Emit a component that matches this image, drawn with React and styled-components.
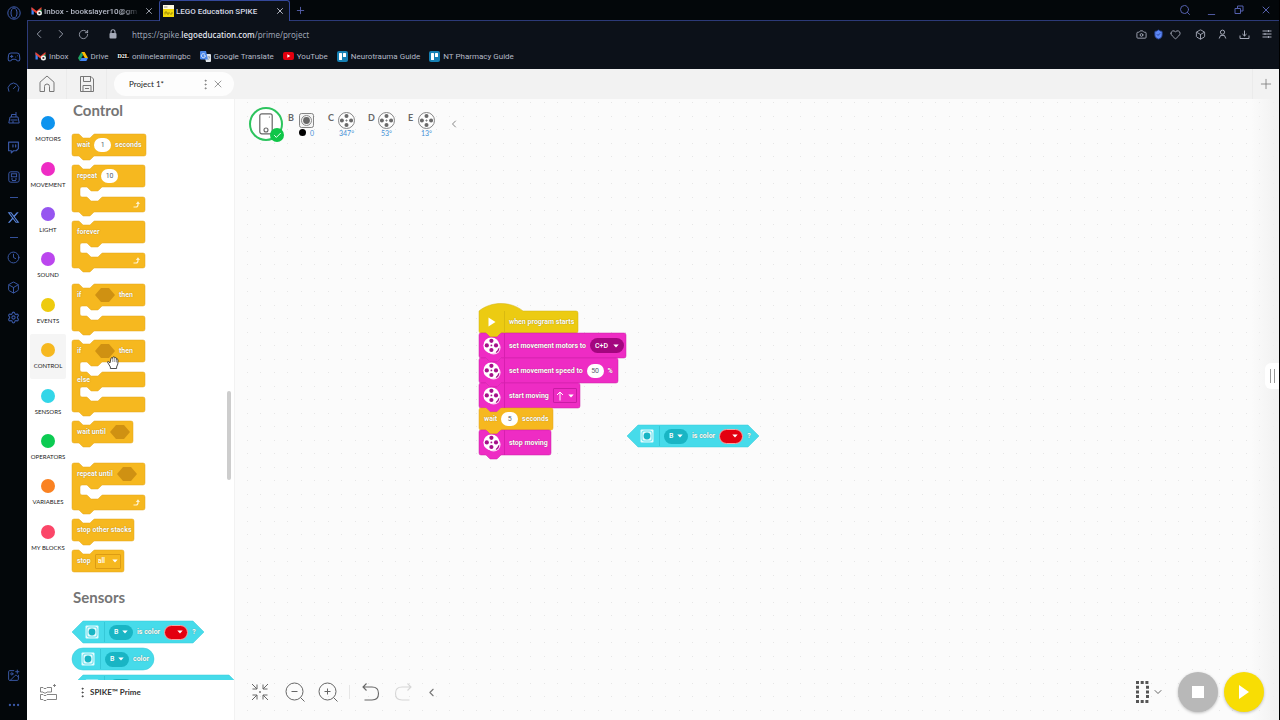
import React from 'react';
import styled, { createGlobalStyle } from 'styled-components';
import {
    Gamepad2, Gauge, Twitch, Clock, Box, Settings, ImagePlus, Ellipsis,
    X, Plus, Search, Minus, ChevronLeft, ChevronRight, ChevronDown, RotateCw,
    Camera, ShieldCheck, Heart, EllipsisVertical, Check,
} from 'lucide-react';
import { FaXTwitter } from 'react-icons/fa6';

const ORANGE = '#f6b81f';
const ORANGE_DARK = '#cf9112';
const PINK = '#ee2cc4';
const YELLOW = '#eccb12';
const CYAN = '#46dbea';
const CYAN_DARK = '#19b5c4';

const categories = [
    { name: 'MOTORS', color: '#0d93ee' },
    { name: 'MOVEMENT', color: '#ee2cc4' },
    { name: 'LIGHT', color: '#9655f0' },
    { name: 'SOUND', color: '#bb46ee' },
    { name: 'EVENTS', color: '#eecb0e' },
    { name: 'CONTROL', color: '#f6b81f', active: true },
    { name: 'SENSORS', color: '#33d6e8' },
    { name: 'OPERATORS', color: '#0ccb52' },
    { name: 'VARIABLES', color: '#fa8222' },
    { name: 'MY BLOCKS', color: '#fb4668' },
];

/* block outlines: the notch is 17 wide and 4 deep */
const NOTCH_R = 'c1 0 1 0 2 1 l2 2 c1 1 1 1 2 1 h5 c1 0 1 0 2 -1 l2 -2 c1 -1 1 -1 2 -1';
const NOTCH_L = 'c-1 0 -1 0 -2 1 l-2 2 c-1 1 -1 1 -2 1 h-5 c-1 0 -1 0 -2 -1 l-2 -2 c-1 -1 -1 -1 -2 -1';

function stackPath(w, rows, { hat, cap }) {
    let d = hat
        ? `M0 0 C12 -10 32 -10 44 0 H${w - 2} a2 2 0 0 1 2 2`
        : `M0 2 a2 2 0 0 1 2 -2 h4 ${NOTCH_R} H${w - 2} a2 2 0 0 1 2 2`;
    let y = 0;
    rows.forEach((h, i) => {
        y += h;
        if (i % 2 === 1) {
            d += ` v${h - 4} a2 2 0 0 0 2 2 H14 ${NOTCH_R} H${w - 2} a2 2 0 0 1 2 2`;
            return;
        }
        d += ` V${y - 2} a2 2 0 0 1 -2 2`;
        if (i < rows.length - 1) {
            d += ` H31 ${NOTCH_L} H10 a2 2 0 0 0 -2 2`;
        } else {
            d += `${cap ? '' : ` H23 ${NOTCH_L}`} H2 a2 2 0 0 1 -2 -2 Z`;
        }
    });
    return d;
}

function Stack({ w, rows, fill, line, hat, cap, children }) {
    const h = rows.reduce((a, b) => a + b, 0);
    return (
        <Block $w={w}>
            <Shape width={w} height={h}>
                <path d={stackPath(w, rows, { hat, cap })} fill={fill} stroke={line || '#e2a51c'} strokeWidth="0.5" />
            </Shape>
            <Body>{children}</Body>
        </Block>
    );
}

function Reporter({ w, round, children }) {
    const d = round
        ? `M11 0 H${w - 11} a11 11 0 0 1 0 22 H11 a11 11 0 0 1 0 -22 Z`
        : `M11 0 H${w - 11} L${w} 11 L${w - 11} 22 H11 L0 11 Z`;
    return (
        <Block $w={w}>
            <Shape width={w} height={22}>
                <path d={d} fill={CYAN} stroke="#35c8d8" strokeWidth="0.5" />
            </Shape>
            <Body>
                <Row $h={22} $pad={round ? 9 : 13}>{children}</Row>
            </Body>
        </Block>
    );
}

const Caret = () => (
    <svg width="6" height="4" viewBox="0 0 6 4"><path d="M0.3 0.5 H5.7 L3 3.6 Z" fill="#fff" /></svg>
);

const Dropdown = ({ label, value, icon, ...style }) => (
    <Picker {...style}>
        {icon}
        <select aria-label={label} defaultValue={value}><option>{value}</option></select>
        <Caret />
    </Picker>
);

const UpArrow = () => (
    <svg width="8" height="10" viewBox="0 0 8 10" fill="none" stroke="#fff" strokeWidth="1">
        <path d="M4 9.5 V1 M1 4 L4 1 L7 4" />
    </svg>
);

const Hexagon = () => (
    <svg width="20" height="14" viewBox="0 0 20 14"><path d="M6 0 H14 L20 7 L14 14 H6 L0 7 Z" fill={ORANGE_DARK} /></svg>
);

const LoopArrow = () => (
    <svg width="7" height="7" viewBox="0 0 7 7">
        <path d="M0.5 6 H3 Q5 6 5 3.5 V2" fill="none" stroke="#fff3cf" strokeWidth="1.2" />
        <path d="M2.8 3 L5 0.2 L7 3 Z" fill="#fff3cf" />
    </svg>
);

const SensorIcon = () => (
    <svg width="14" height="14" viewBox="0 0 14 14">
        <rect x="0.5" y="0.5" width="13" height="13" rx="1" fill="#e6fbfd" />
        <rect x="2" y="2" width="10" height="10" rx="2" fill="none" stroke={CYAN} strokeWidth="0.8" />
        <circle cx="7" cy="7" r="3.4" fill={CYAN_DARK} />
    </svg>
);

const WheelIcon = () => (
    <svg width="18" height="18" viewBox="0 0 18 18">
        <circle cx="10.6" cy="10.6" r="7" fill="#fbd5f2" />
        <circle cx="8.4" cy="8.4" r="8" fill="#fff" />
        <g fill="#a5108a">
            <circle cx="8.4" cy="3.8" r="2.1" /><circle cx="8.4" cy="13" r="2.1" />
            <circle cx="3.8" cy="8.4" r="2.1" /><circle cx="13" cy="8.4" r="2.1" />
            <circle cx="8.4" cy="8.4" r="0.9" />
        </g>
        <path d="M13.2 15.4 Q15.6 14 15.8 11.4" fill="none" stroke="#a5108a" strokeWidth="1.2" />
    </svg>
);

const MotorIcon = () => (
    <svg width="17" height="17" viewBox="0.5 0.5 17 17">
        <circle cx="9" cy="9" r="8" fill="#fdfdfd" stroke="#777" strokeWidth="0.9" />
        <g fill="#6a6a6a">
            <circle cx="9" cy="4.4" r="2" /><circle cx="9" cy="13.6" r="2" />
            <circle cx="4.4" cy="9" r="2" /><circle cx="13.6" cy="9" r="2" />
        </g>
        <path d="M9 7.8 V10.2 M7.8 9 H10.2" stroke="#777" strokeWidth="0.7" />
    </svg>
);

const ColorSensorIcon = () => (
    <svg width="17" height="17" viewBox="0.5 0.5 17 17">
        <rect x="2" y="2" width="14" height="14" rx="2" fill="#f4f4f4" stroke="#777" strokeWidth="0.9" />
        <circle cx="9" cy="9" r="5" fill="none" stroke="#8b8b8b" strokeWidth="1" />
        <circle cx="9" cy="9" r="3.4" fill="#686868" />
    </svg>
);

const GmailIcon = () => (
    <svg width="11" height="10" viewBox="0 0 11 10">
        <path d="M0.5 1.5 V8.5 H2.8 V4.4" fill="#4285f4" />
        <path d="M0.5 1 L5.5 5 L10.5 1 V3.6 L5.5 7.4 L0.5 3.6 Z" fill="#ea4335" />
        <path d="M8.2 4.8 L10.5 3 V8.5 H8.2 Z" fill="#34a853" />
        <circle cx="8.4" cy="7" r="2.5" fill="#f3f3f3" />
        <circle cx="8.4" cy="7" r="1.1" fill="#333" />
    </svg>
);

const DriveIcon = () => (
    <svg width="10" height="9" viewBox="0 0 10 9">
        <path d="M3.4 0 H6.6 L10 6 H6.8 Z" fill="#fbbc04" />
        <path d="M3.4 0 L5 2.9 L1.7 9 L0 6 Z" fill="#1fa463" />
        <path d="M3.4 6 H10 L8.3 9 H1.7 Z" fill="#4285f4" />
    </svg>
);

const TranslateIcon = () => (
    <svg width="11" height="11" viewBox="0 0 11 11">
        <path d="M4 3 H10 Q11 3 11 4 V10 Q11 11 10 11 H6 Z" fill="#dfe4ea" />
        <path d="M1 0 H6 L8 8.5 H1 Q0 8.5 0 7.5 V1 Q0 0 1 0 Z" fill="#4a86e8" />
        <path d="M5 3.5 A2 2 0 1 0 5.4 4.8 H3.8" fill="none" stroke="#fff" strokeWidth="0.8" />
        <path d="M7.6 6 H10 M8.8 5.2 V6 M9.8 6 Q9.4 8 7.9 8.8" fill="none" stroke="#7a8796" strokeWidth="0.6" />
    </svg>
);

const YoutubeIcon = () => (
    <svg width="11" height="8" viewBox="0 0 11 8">
        <rect width="11" height="8" rx="2" fill="#e3000f" />
        <path d="M4.3 2.2 L7.3 4 L4.3 5.8 Z" fill="#fff" />
    </svg>
);

const TrelloIcon = () => (
    <svg width="11" height="11" viewBox="0 0 11 11">
        <rect width="11" height="11" rx="2" fill="#1680b4" />
        <rect x="2" y="2" width="3" height="7" rx="0.5" fill="#fff" />
        <rect x="6" y="2" width="3" height="4" rx="0.5" fill="#fff" />
    </svg>
);

const SpikeIcon = () => (
    <svg width="11" height="12" viewBox="0 0 11 12">
        <rect width="11" height="12" fill="#f3d90c" />
        <rect width="11" height="4" fill="#fffbe0" />
        <path d="M1 2 H4.5" stroke="#777" strokeWidth="0.8" />
        <path d="M2 9.5 V7 H4 V9 H6 V7 M7 9 H9 V7" fill="none" stroke="#8b7c05" strokeWidth="0.8" />
    </svg>
);

const OperaIcon = () => (
    <svg width="14" height="14" viewBox="0 0 14 14" fill="none" stroke="#3f5cae" strokeWidth="1">
        <circle cx="7" cy="7" r="6.2" />
        <ellipse cx="7" cy="7" rx="3" ry="5" />
    </svg>
);

const CleanerIcon = () => (
    <svg width="12" height="13" viewBox="0 0 12 13" fill="none" stroke="currentColor" strokeWidth="1">
        <path d="M2 6 H10 L11.2 12 H0.8 Z M3.5 6 V3.5 H8 M8 6 V1 M2.5 9 H9.5 M5 12 V10" />
    </svg>
);

const ModsIcon = () => (
    <svg width="12" height="12" viewBox="0 0 12 12" fill="none" stroke="currentColor" strokeWidth="1">
        <rect x="0.8" y="0.8" width="10.4" height="10.4" rx="2" />
        <rect x="3.4" y="2.8" width="5.2" height="3" />
        <path d="M3 8 H5 M7 8 H9 M4 9.5 H8" />
    </svg>
);

const RestoreIcon = () => (
    <svg width="10" height="10" viewBox="0 0 10 10" fill="none" stroke="currentColor" strokeWidth="1">
        <path d="M1 3.5 H6.5 V8.5 H1 Z M3.5 3.5 V1 H9 V6 H6.5" />
    </svg>
);

const LockIcon = () => (
    <svg width="8" height="10" viewBox="0 0 8 10">
        <rect x="0.5" y="4" width="7" height="5.5" rx="1" fill="#a6abb9" />
        <path d="M2 4 V2.8 A2 2 0 0 1 6 2.8 V4" fill="none" stroke="#a6abb9" strokeWidth="1.1" />
    </svg>
);

const PersonIcon = () => (
    <svg width="9" height="11" viewBox="0 0 9 11" fill="none" stroke="currentColor" strokeWidth="1">
        <circle cx="4.5" cy="3.2" r="2.1" />
        <path d="M1.2 9.5 L2.6 6.4 H6.4 L7.8 9.5" />
    </svg>
);

const DownloadIcon = () => (
    <svg width="11" height="11" viewBox="0 0 11 11" fill="none" stroke="currentColor" strokeWidth="1">
        <path d="M5.5 1.5 V7 M3.4 5 L5.5 7 L7.6 5 M1 6.5 V9.5 H10 V6.5" />
    </svg>
);

const SlidersIcon = () => (
    <svg width="10" height="10" viewBox="0 0 10 10" fill="none" stroke="currentColor" strokeWidth="1">
        <path d="M0.5 2 H9.5 M0.5 5 H9.5 M0.5 8 H9.5 M6.5 1 V3 M3 4 V6 M6.5 7 V9" />
    </svg>
);

const HomeIcon = () => (
    <svg width="16" height="18" viewBox="0 0 16 18" fill="none" stroke="#777" strokeWidth="1">
        <path d="M1 7.2 L8 1 L15 7.2 V16.5 H10.5 V11.5 Q10.5 9 8 9 Q5.5 9 5.5 11.5 V16.5 H1 Z" />
    </svg>
);

const SaveIcon = () => (
    <svg width="14" height="16" viewBox="0 0 14 16" fill="none" stroke="#777" strokeWidth="1">
        <path d="M0.5 0.5 H11 L13.5 3 V15.5 H0.5 Z M3.5 0.5 V5.5 H10.5 V0.5 M3 15.5 V9.5 H11 V15.5 M5 12.5 H9" />
    </svg>
);

const HubIcon = () => (
    <svg width="14" height="22" viewBox="0 0 14 22" fill="none" stroke="#666">
        <rect x="0.8" y="0.8" width="12.4" height="20" rx="2" strokeWidth="1.2" />
        <circle cx="7" cy="17" r="2" strokeWidth="1.1" />
        <circle cx="10.4" cy="4" r="0.6" fill="#666" stroke="none" />
    </svg>
);

const ExtensionIcon = () => (
    <svg width="17" height="17" viewBox="0 0 17 17" fill="none" stroke="#777" strokeWidth="0.9">
        <path d="M0.5 3.5 H3 L4 4.5 H6 L7 3.5 H11.5 V8 H7 L6 9 H4 L3 8 H0.5 Z" />
        <path d="M0.5 10.5 H3 L4 11.5 H6 L7 10.5 H16.5 V15.5 H7 L6 16.5 H4 L3 15.5 H0.5 Z" />
        <path d="M14.5 0 V3 M13 1.5 H16" />
    </svg>
);

const FitIcon = () => (
    <svg width="18" height="18" viewBox="0 0 18 18" fill="none" stroke="#666" strokeWidth="1">
        <path d="M1 1 L6 6 M1.5 6 H6 V1.5 M17 1 L12 6 M16.5 6 H12 V1.5 M1 17 L6 12 M1.5 12 H6 V16.5 M17 17 L12 12 M16.5 12 H12 V16.5" />
        <rect x="8.2" y="8.2" width="1.6" height="1.6" fill="#666" stroke="none" />
    </svg>
);

const ZoomIcon = ({ plus }) => (
    <svg width="20" height="20" viewBox="0 0 20 20" fill="none" stroke="#666" strokeWidth="1">
        <circle cx="9.5" cy="9.5" r="8.5" />
        <path d={`M15.5 15.5 L19.5 19.5 M6.5 9.5 H12.5 ${plus ? 'M9.5 6.5 V12.5' : ''}`} />
    </svg>
);

const UndoIcon = ({ flip }) => (
    <svg width="18" height="18" viewBox="0 0 18 18" fill="none" stroke={flip ? '#d6d6d6' : '#666'} strokeWidth="1.1">
        <g transform={flip ? 'translate(18 0) scale(-1 1)' : undefined}>
            <path d="M4.5 0.5 L1 4 L4.5 7.5 M1 4 H10 Q16.5 4 16.5 10.5 Q16.5 17 10 17 H2.5" />
        </g>
    </svg>
);

const MatrixIcon = () => (
    <svg width="13" height="22" viewBox="0 0 13 22" fill="none" stroke="#555" strokeWidth="3" strokeDasharray="3 1.7">
        <path d="M0 1.5 H13 M0 20.5 H13" />
        <path d="M1.5 4.7 V18 M11.5 4.7 V18" />
    </svg>
);

const HandCursor = () => (
    <svg width="12" height="13" viewBox="0 0 12 13">
        <path
            d="M3 7 L1.4 5.6 Q0.4 5.4 0.6 6.4 L3.4 11 V12.5 H9.6 V11 Q11.4 8.5 11 3.6 Q10.2 2.6 9.6 3.4 V2.2 Q8.6 1 7.8 2 V1.4 Q6.8 0 5.8 1.4 V2.2 Q4.6 1.2 4 2.2 Z"
            fill="#fff" stroke="#222" strokeWidth="0.8"
        />
        <path d="M5.8 2.2 V6 M7.8 2 V6 M9.6 3.4 V6.4" stroke="#222" strokeWidth="0.5" />
    </svg>
);

const Bookmark = ({ icon, children }) => (
    <BookmarkLink href="#">{icon}{children}</BookmarkLink>
);

function ColorQuestion() {
    return (
        <>
            <SensorIcon />
            <Divider $color="#35c8d8" />
            <Dropdown label="Port" value="B" $w={24} $bg={CYAN_DARK} />
            <Text>is color</Text>
            <Dropdown label="Color" value="" $w={24} $bg="#e3000f" $line="#f7a3a3" />
            <Text>?</Text>
        </>
    );
}

function Rail() {
    return (
        <RailBox>
            <RailButton aria-label="Opera menu" $first><OperaIcon /></RailButton>
            <RailButton aria-label="GX Corner"><Gamepad2 size={14} strokeWidth={1.8} /></RailButton>
            <RailButton aria-label="GX Control"><Gauge size={13} strokeWidth={1.8} /></RailButton>
            <RailButton aria-label="GX Cleaner"><CleanerIcon /></RailButton>
            <RailButton aria-label="Twitch"><Twitch size={13} strokeWidth={2.2} /></RailButton>
            <RailButton aria-label="Mods"><ModsIcon /></RailButton>
            <RailDash />
            <RailButton aria-label="X" $bright><FaXTwitter size={13} /></RailButton>
            <RailDash />
            <RailButton aria-label="History"><Clock size={13} strokeWidth={1.8} /></RailButton>
            <RailButton aria-label="Extensions"><Box size={13} strokeWidth={1.8} /></RailButton>
            <RailButton aria-label="Settings"><Settings size={13} strokeWidth={2} /></RailButton>
            <Spacer />
            <RailButton aria-label="Easy files"><ImagePlus size={13} strokeWidth={1.8} /></RailButton>
            <RailButton aria-label="More"><Ellipsis size={14} strokeWidth={2} /></RailButton>
        </RailBox>
    );
}

function BrowserBars() {
    return (
        <>
            <TabStrip>
                <Tab><GmailIcon /><TabTitle $fade>Inbox - bookslayer10@gm</TabTitle><X size={10} /></Tab>
                <Tab $active><SpikeIcon /><TabTitle>LEGO Education SPIKE</TabTitle><X size={10} /></Tab>
                <WindowButton aria-label="New tab"><Plus size={11} /></WindowButton>
                <Spacer />
                <WindowButton aria-label="Search tabs"><Search size={12} /></WindowButton>
                <WindowButton aria-label="Minimize" $low><Minus size={11} /></WindowButton>
                <WindowButton aria-label="Restore"><RestoreIcon /></WindowButton>
                <WindowButton aria-label="Close"><X size={12} /></WindowButton>
            </TabStrip>
            <AddressBar>
                <BarButton aria-label="Back"><ChevronLeft size={14} strokeWidth={1.5} /></BarButton>
                <BarButton aria-label="Forward"><ChevronRight size={14} strokeWidth={1.5} /></BarButton>
                <BarButton aria-label="Reload"><RotateCw size={11} strokeWidth={1.8} /></BarButton>
                <BarButton aria-label="Site information" $wide><LockIcon /></BarButton>
                <Url>https://spike.<b>legoeducation.com</b>/prime/project</Url>
                <Spacer />
                <ToolButton aria-label="Snapshot"><Camera size={11} /></ToolButton>
                <ToolButton aria-label="Ad blocker"><ShieldCheck size={11} color="#24408f" fill="#5c86f5" /></ToolButton>
                <ToolButton aria-label="Add to favorites"><Heart size={11} /></ToolButton>
                <ToolButton aria-label="Extensions" $gap={14}><Box size={11} /></ToolButton>
                <ToolButton aria-label="Profile" $gap={12}><PersonIcon /></ToolButton>
                <ToolButton aria-label="Downloads" $gap={12}><DownloadIcon /></ToolButton>
                <ToolButton aria-label="Easy setup" $gap={12}><SlidersIcon /></ToolButton>
            </AddressBar>
            <Bookmarks>
                <Bookmark icon={<GmailIcon />}>Inbox</Bookmark>
                <Bookmark icon={<DriveIcon />}>Drive</Bookmark>
                <Bookmark icon={<D2L>D2L</D2L>}>onlinelearningbc</Bookmark>
                <Bookmark icon={<TranslateIcon />}>Google Translate</Bookmark>
                <Bookmark icon={<YoutubeIcon />}>YouTube</Bookmark>
                <Bookmark icon={<TrelloIcon />}>Neurotrauma Guide</Bookmark>
                <Bookmark icon={<TrelloIcon />}>NT Pharmacy Guide</Bookmark>
            </Bookmarks>
        </>
    );
}

function Palette() {
    return (
        <PaletteBox>
            <Heading>Control</Heading>
            <Slot>
                <Stack w={74} rows={[22]} fill={ORANGE}>
                    <Row $h={22}><Text>wait</Text><Value aria-label="Seconds" defaultValue="1" /><Text>seconds</Text></Row>
                </Stack>
            </Slot>
            <Slot $gap={9}>
                <Stack w={73} rows={[22, 10, 15]} fill={ORANGE}>
                    <Row $h={22}><Text>repeat</Text><Value aria-label="Times" defaultValue="10" /></Row>
                    <Row $h={10} />
                    <Row $h={15} $end><LoopArrow /></Row>
                </Stack>
            </Slot>
            <Slot $gap={9}>
                <Stack w={73} rows={[22, 10, 15]} fill={ORANGE}>
                    <Row $h={22}><Text>forever</Text></Row>
                    <Row $h={10} />
                    <Row $h={15} $end><LoopArrow /></Row>
                </Stack>
            </Slot>
            <Slot $gap={16}>
                <Stack w={73} rows={[22, 10, 15]} fill={ORANGE}>
                    <Row $h={22}><Text $w={14}>if</Text><Hexagon /><Text>then</Text></Row>
                </Stack>
            </Slot>
            <Slot $gap={9}>
                <Stack w={73} rows={[22, 10, 15, 10, 15]} fill={ORANGE}>
                    <Row $h={22}><Text $w={14}>if</Text><Hexagon /><Text>then</Text></Row>
                    <Row $h={10} />
                    <Row $h={15}><Text>else</Text></Row>
                </Stack>
                <Pointer><HandCursor /></Pointer>
            </Slot>
            <Slot $gap={9}>
                <Stack w={61} rows={[22]} fill={ORANGE}>
                    <Row $h={22}><Text>wait until</Text><Hexagon /></Row>
                </Stack>
            </Slot>
            <Slot $gap={20}>
                <Stack w={73} rows={[22, 10, 15]} fill={ORANGE}>
                    <Row $h={22}><Text>repeat until</Text><Hexagon /></Row>
                    <Row $h={10} />
                    <Row $h={15} $end><LoopArrow /></Row>
                </Stack>
            </Slot>
            <Slot $gap={9}>
                <Stack w={62} rows={[22]} fill={ORANGE}>
                    <Row $h={22}><Text>stop other stacks</Text></Row>
                </Stack>
            </Slot>
            <Slot $gap={9}>
                <Stack w={52} rows={[22]} fill={ORANGE} cap>
                    <Row $h={22}>
                        <Text>stop</Text>
                        <Dropdown label="Stop" value="all" $w={26} $bg="transparent" $line="#dc9c14" $square />
                    </Row>
                </Stack>
            </Slot>
            <Heading $later>Sensors</Heading>
            <Slot><Reporter w={132}><ColorQuestion /></Reporter></Slot>
            <Slot $gap={5}>
                <Reporter w={82} round>
                    <SensorIcon />
                    <Divider $color="#35c8d8" />
                    <Dropdown label="Port" value="B" $w={24} $bg={CYAN_DARK} />
                    <Text>color</Text>
                </Reporter>
            </Slot>
            <Slot $gap={5}>
                <Reporter w={168}>
                    <SensorIcon />
                    <Divider $color="#35c8d8" />
                    <Dropdown label="Port" value="" $w={24} $bg={CYAN_DARK} />
                </Reporter>
            </Slot>
            <Thumb />
        </PaletteBox>
    );
}

function Program() {
    return (
        <>
            <Placed $x={244} $y={212}>
                <Stack w={99} rows={[22]} fill={YELLOW} line="#d0b010" hat>
                    <Row $h={22} $pad={0}>
                        <IconCell $line="#d9ba10"><svg width="8" height="10"><path d="M0.5 0.5 L7.5 5 L0.5 9.5 Z" fill="#fff" /></svg></IconCell>
                        <Text>when program starts</Text>
                    </Row>
                </Stack>
                <Stack w={147} rows={[25]} fill={PINK} line="#c81ca4">
                    <Row $h={25} $pad={0}>
                        <IconCell $line="#d81fb0"><WheelIcon /></IconCell>
                        <Text>set movement motors to</Text>
                        <Dropdown label="Motors" value="C+D" $w={34} $bg="#a3067f" />
                    </Row>
                </Stack>
                <Stack w={139} rows={[25]} fill={PINK} line="#c81ca4">
                    <Row $h={25} $pad={0}>
                        <IconCell $line="#d81fb0"><WheelIcon /></IconCell>
                        <Text>set movement speed to</Text>
                        <Value aria-label="Speed" defaultValue="50" />
                        <Text>%</Text>
                    </Row>
                </Stack>
                <Stack w={101} rows={[25]} fill={PINK} line="#c81ca4">
                    <Row $h={25} $pad={0}>
                        <IconCell $line="#d81fb0"><WheelIcon /></IconCell>
                        <Text>start moving</Text>
                        <Dropdown label="Direction" value="" icon={<UpArrow />} $w={24} $bg="transparent" $line="#c81ca4" $square />
                    </Row>
                </Stack>
                <Stack w={74} rows={[22]} fill={ORANGE}>
                    <Row $h={22}><Text>wait</Text><Value aria-label="Seconds" defaultValue="5" /><Text>seconds</Text></Row>
                </Stack>
                <Stack w={72} rows={[25]} fill={PINK} line="#c81ca4">
                    <Row $h={25} $pad={0}>
                        <IconCell $line="#d81fb0"><WheelIcon /></IconCell>
                        <Text>stop moving</Text>
                    </Row>
                </Stack>
            </Placed>
            <Placed $x={392} $y={326}>
                <Reporter w={132}><ColorQuestion /></Reporter>
            </Placed>
        </>
    );
}

function App() {
    return (
        <Window>
            <GlobalStyle />
            <Rail />
            <Browser>
                <BrowserBars />
                <Page>
                    <Header>
                        <HeaderButton aria-label="Home"><HomeIcon /></HeaderButton>
                        <HeaderButton aria-label="Save"><SaveIcon /></HeaderButton>
                        <ProjectTab>
                            <span>Project 1*</span>
                            <IconButton aria-label="Project menu"><EllipsisVertical size={13} strokeWidth={1.5} /></IconButton>
                            <IconButton aria-label="Close project"><X size={12} strokeWidth={1.5} /></IconButton>
                        </ProjectTab>
                        <Spacer />
                        <AddButton aria-label="New project"><Plus size={16} strokeWidth={1.2} /></AddButton>
                    </Header>
                    <Workspace>
                        <Side>
                            <Library>
                                <Categories>
                                    {categories.map((c) => (
                                        <Category key={c.name} $active={c.active}>
                                            <Dot $color={c.color} />
                                            {c.name}
                                        </Category>
                                    ))}
                                </Categories>
                                <Palette />
                            </Library>
                            <SideFooter>
                                <IconButton aria-label="Extensions"><ExtensionIcon /></IconButton>
                                <Product><EllipsisVertical size={13} strokeWidth={1.5} />SPIKE™ Prime</Product>
                            </SideFooter>
                        </Side>
                        <Canvas>
                            <Ports>
                                <Hub aria-label="Hub connected">
                                    <HubIcon />
                                    <Badge><Check size={9} strokeWidth={2.5} /></Badge>
                                </Hub>
                                <Port><b>B</b><ColorSensorIcon /><Reading><BlackDot />0</Reading></Port>
                                <Port><b>C</b><MotorIcon /><Reading>347°</Reading></Port>
                                <Port><b>D</b><MotorIcon /><Reading>53°</Reading></Port>
                                <Port><b>E</b><MotorIcon /><Reading>13°</Reading></Port>
                                <IconButton aria-label="Hide ports"><ChevronLeft size={12} strokeWidth={1.8} /></IconButton>
                            </Ports>
                            <Program />
                            <Controls>
                                <ToolCell aria-label="Fit" $w={36}><FitIcon /></ToolCell>
                                <ToolCell aria-label="Zoom out" $w={34}><ZoomIcon /></ToolCell>
                                <ToolCell aria-label="Zoom in" $w={32}><ZoomIcon plus /></ToolCell>
                                <Separator />
                                <ToolCell aria-label="Undo" $w={32}><UndoIcon /></ToolCell>
                                <ToolCell aria-label="Redo" $w={32}><UndoIcon flip /></ToolCell>
                                <ToolCell aria-label="Hide tools" $w={24}><ChevronLeft size={13} strokeWidth={2} /></ToolCell>
                                <Spacer />
                                <SlotButton aria-label="Program slot"><MatrixIcon /><ChevronDown size={12} strokeWidth={1.8} /></SlotButton>
                                <RoundButton aria-label="Stop" $bg="#b8b8b8"><svg width="12" height="12"><rect width="12" height="12" fill="#fff" /></svg></RoundButton>
                                <RoundButton aria-label="Run" $bg="#f8dd04"><svg width="10" height="14"><path d="M0 0 L10 7 L0 14 Z" fill="#fff" /></svg></RoundButton>
                            </Controls>
                            <Drawer aria-label="Open side panel"><i /><i /></Drawer>
                        </Canvas>
                    </Workspace>
                </Page>
            </Browser>
        </Window>
    );
}

const GlobalStyle = createGlobalStyle`
    *{
        box-sizing: border-box;
    }

    body{
        margin: 0;
        background: #03070a;
    }

    button, input, select{
        font: inherit;
        color: inherit;
        border: 0;
        margin: 0;
        padding: 0;
        background: none;
    }

    svg{
        display: block;
        flex-shrink: 0;
    }
`;

const Window = styled.div`
    display: flex;
    height: 100vh;
    overflow: hidden;
    font-family: Roboto, "Noto Sans", sans-serif;
    font-size: 8px;
    background: #03070a;
`;

const Spacer = styled.div`
    flex: 1;
`;

const RailBox = styled.nav`
    width: 27px;
    display: flex;
    flex-direction: column;
`;

const RailButton = styled.button`
    height: ${(p) => (p.$first ? 26 : 30)}px;
    margin-bottom: ${(p) => (p.$first ? 16 : 0)}px;
    flex-shrink: 0;
    display: flex;
    align-items: center;
    justify-content: center;
    color: ${(p) => (p.$bright ? '#5a86dc' : '#3a58a6')};
`;

const RailDash = styled.div`
    width: 8px;
    height: 1px;
    margin: 5px auto 4px;
    background: #34509a;
`;

const Browser = styled.div`
    flex: 1;
    min-width: 0;
    display: flex;
    flex-direction: column;
    border-right: 1px solid #000;
`;

const TabStrip = styled.div`
    height: 21px;
    display: flex;
    align-items: stretch;
    border-bottom: 1px solid #2c3a78;
`;

const Tab = styled.button`
    width: ${(p) => (p.$active ? 131 : 132)}px;
    height: 21px;
    display: flex;
    align-items: center;
    gap: 2px;
    padding: 0 4px 0 3px;
    color: ${(p) => (p.$active ? '#d6dae6' : '#b4b9c6')};
    font-weight: 500;
    background: ${(p) => (p.$active ? '#0c1119' : 'transparent')};
    border: 1px solid ${(p) => (p.$active ? '#34489a' : 'transparent')};
    border-bottom: 0;
    border-radius: 3px 3px 0 0;
`;

const TabTitle = styled.span`
    flex: 1;
    overflow: hidden;
    white-space: nowrap;
    text-align: left;
    font-size: 8px;
    mask-image: ${(p) => (p.$fade ? 'linear-gradient(90deg, #000 80%, transparent 98%)' : 'none')};
`;

const WindowButton = styled.button`
    width: 27px;
    display: flex;
    justify-content: center;
    align-items: ${(p) => (p.$low ? 'flex-end' : 'center')};
    color: #5560ae;

    &:nth-child(3){
        width: 20px;
    }
`;

const AddressBar = styled.div`
    height: 26px;
    display: flex;
    align-items: center;
    padding-right: 7px;
    color: #a6abb9;
    background: #0c1119;
    border-left: 1px solid #2c3a78;
`;

const BarButton = styled.button`
    width: ${(p) => (p.$wide ? 38 : 22)}px;
    display: flex;
    justify-content: center;
`;

const Url = styled.div`
    color: #9da3b3;
    font-family: "Noto Sans", sans-serif;
    font-size: 8px;

    b{
        font-weight: 500;
        color: #e6e9f2;
    }
`;

const ToolButton = styled.button`
    margin-left: ${(p) => p.$gap || 6}px;
`;

const Bookmarks = styled.nav`
    height: 22px;
    display: flex;
    align-items: flex-start;
    gap: 9px;
    padding: 3px 0 0 7px;
    background: #0c1119;
    border-left: 1px solid #2c3a78;
`;

const BookmarkLink = styled.a`
    height: 12px;
    display: flex;
    align-items: center;
    gap: 3px;
    color: #b4b9c6;
    font-size: 8px;
    text-decoration: none;
    white-space: nowrap;
`;

const D2L = styled.span`
    font-family: "Liberation Serif", serif;
    font-size: 6px;
    font-weight: 700;
    color: #fff;
    background: #000;
`;

const Page = styled.main`
    flex: 1;
    min-height: 0;
    display: flex;
    flex-direction: column;
    background: #fff;
    font-family: Lato, "Open Sans", sans-serif;
`;

const Header = styled.header`
    height: 30px;
    display: flex;
    align-items: center;
    background: #f2f2f2;
    color: #777;
`;

const HeaderButton = styled.button`
    width: 40px;
    height: 30px;
    display: flex;
    align-items: center;
    justify-content: center;
    border-right: 1px solid #ebebeb;
`;

const ProjectTab = styled.div`
    width: 120px;
    height: 24px;
    display: flex;
    align-items: center;
    margin-left: 7px;
    padding: 0 10px 0 15px;
    border-radius: 12px;
    background: #fdfdfd;
    color: #666;

    span{
        flex: 1;
        font-size: 8px;
        color: #222;
    }
`;

const IconButton = styled.button`
    display: flex;
    color: #777;
`;

const AddButton = styled.button`
    width: 27px;
    height: 30px;
    display: flex;
    align-items: center;
    justify-content: center;
    border-left: 1px solid #ebebeb;
    color: #777;
`;

const Workspace = styled.div`
    flex: 1;
    min-height: 0;
    display: flex;
`;

const Side = styled.aside`
    width: 208px;
    display: flex;
    flex-direction: column;
    border-right: 1px solid #f2f2f2;
`;

const Library = styled.div`
    flex: 1;
    min-height: 0;
    display: flex;
    overflow: hidden;
`;

const Categories = styled.div`
    width: 42px;
    height: 454px;
    display: flex;
    flex-direction: column;
    align-items: center;
    margin-top: 8px;
`;

const Category = styled.button`
    flex: 1;
    width: 36px;
    display: flex;
    flex-direction: column;
    align-items: center;
    justify-content: center;
    gap: 5px;
    white-space: nowrap;
    border-radius: 2px;
    font-size: 6px;
    line-height: 8px;
    color: #222;
    background: ${(p) => (p.$active ? '#f5f5f5' : 'transparent')};
`;

const Dot = styled.span`
    width: 14px;
    height: 14px;
    flex-shrink: 0;
    border-radius: 50%;
    background: ${(p) => p.$color};
`;

const PaletteBox = styled.div`
    position: relative;
    flex: 1;
    min-width: 0;
    padding-left: 3px;
    overflow: hidden;
`;

const Heading = styled.h2`
    margin: ${(p) => (p.$later ? 14 : 0)}px 0 13px;
    padding-left: 1px;
    font-size: 15px;
    line-height: 22px;
    font-weight: 700;
    color: #757575;
`;

const Slot = styled.div`
    position: relative;
    margin-top: ${(p) => p.$gap || 0}px;
`;

const Block = styled.div`
    display: grid;
    width: ${(p) => p.$w}px;
    font-family: Roboto, "Liberation Sans", Arial, sans-serif;
    font-size: 7px;
    font-weight: 700;
    color: #fff;
`;

const Shape = styled.svg`
    grid-area: 1 / 1;
    overflow: visible;
`;

const Body = styled.div`
    grid-area: 1 / 1;
    z-index: 1;
`;

const Row = styled.div`
    height: ${(p) => p.$h}px;
    display: flex;
    align-items: center;
    justify-content: ${(p) => (p.$end ? 'flex-end' : 'flex-start')};
    gap: 4px;
    padding: 0 5px 0 ${(p) => (p.$pad === undefined ? 5 : p.$pad)}px;
`;

const Text = styled.span`
    min-width: ${(p) => p.$w || 0}px;
    white-space: nowrap;
    text-shadow: 0 0 1px rgba(60, 40, 0, 0.5);
`;

const Value = styled.input`
    width: 17px;
    height: 14px;
    border-radius: 7px;
    background: #fff;
    color: #56606e;
    font-weight: 400;
    text-align: center;
`;

const Picker = styled.span`
    width: ${(p) => p.$w}px;
    height: 15px;
    display: flex;
    align-items: center;
    flex-shrink: 0;
    padding: 0 ${(p) => (p.$square ? 2 : 4)}px;
    border-radius: ${(p) => (p.$square ? 1 : 8)}px;
    border: 1px solid ${(p) => p.$line || 'transparent'};
    background: ${(p) => p.$bg};

    select{
        flex: 1;
        min-width: 0;
        appearance: none;
        font-weight: 500;
    }
`;

const Divider = styled.span`
    width: 1px;
    height: 20px;
    margin-left: 1px;
    background: ${(p) => p.$color};
`;

const IconCell = styled.span`
    width: 26px;
    height: 100%;
    display: flex;
    align-items: center;
    justify-content: center;
    border-right: 1px solid ${(p) => p.$line};
`;

const Pointer = styled.div`
    position: absolute;
    left: 35px;
    top: 16px;
    z-index: 2;
`;

const Thumb = styled.div`
    position: absolute;
    right: 3px;
    top: 292px;
    width: 4px;
    height: 89px;
    border-radius: 2px;
    background: #cdcdcd;
`;

const SideFooter = styled.footer`
    height: 40px;
    display: flex;
    gap: 19px;
    padding: 4px 0 0 13px;
`;

const Product = styled.div`
    height: 16px;
    display: flex;
    align-items: center;
    gap: 1px;
    color: #333;
    font-size: 8px;
    font-weight: 700;
`;

const Canvas = styled.section`
    position: relative;
    flex: 1;
    min-width: 0;
    display: flex;
    flex-direction: column;
    justify-content: space-between;
    overflow: hidden;
    background:
        linear-gradient(270deg, #f1f1f1, transparent) right / 28px 100% no-repeat,
        conic-gradient(from 90deg at 26px 26px, #e6e6e6 90deg, transparent 0) 13px 18px / 27px 27px,
        conic-gradient(from 90deg at 26px 26px, #e6e6e6 90deg, transparent 0) 26px 18px / 27px 27px,
        conic-gradient(from 90deg at 26px 26px, #e6e6e6 90deg, transparent 0) 13px 31px / 27px 27px,
        conic-gradient(from 90deg at 26px 26px, #e6e6e6 90deg, transparent 0) 26px 31px / 27px 27px,
        #fbfbfb;
`;

const Ports = styled.div`
    display: flex;
    align-items: center;
    padding: 8px 0 0 14px;
`;

const Hub = styled.button`
    position: relative;
    width: 34px;
    height: 34px;
    display: flex;
    align-items: center;
    justify-content: center;
    margin-right: 5px;
    border: 2px solid #2dc45e;
    border-radius: 50%;
    background: #fff;
`;

const Badge = styled.span`
    position: absolute;
    right: -3px;
    bottom: -3px;
    width: 14px;
    height: 14px;
    display: flex;
    align-items: center;
    justify-content: center;
    border-radius: 50%;
    background: #0fc648;
    color: #fff;
`;

const Port = styled.div`
    width: 40px;
    display: grid;
    grid-template-columns: 10px 17px;
    align-items: start;
    font-size: 9px;
    line-height: 12px;
    color: #666;
`;

const Reading = styled.span`
    grid-column: 2;
    height: 7px;
    display: flex;
    align-items: center;
    justify-content: center;
    gap: 4px;
    font-size: 7px;
    color: #3f8fd6;
`;

const BlackDot = styled.i`
    width: 7px;
    height: 7px;
    border-radius: 50%;
    background: #000;
`;

const Placed = styled.div`
    position: absolute;
    left: ${(p) => p.$x}px;
    top: ${(p) => p.$y}px;
`;

const Controls = styled.div`
    display: flex;
    align-items: center;
    padding: 0 15px 8px 7px;
`;

const ToolCell = styled.button`
    width: ${(p) => p.$w}px;
    display: flex;
    justify-content: center;
    color: #777;
`;

const Separator = styled.span`
    width: 1px;
    height: 14px;
    margin: 0 5px;
    background: #e6e6e6;
`;

const SlotButton = styled.button`
    display: flex;
    align-items: center;
    gap: 3px;
    margin-right: 14px;
    color: #555;
`;

const RoundButton = styled.button`
    width: 40px;
    height: 40px;
    display: flex;
    align-items: center;
    justify-content: center;
    margin-right: 6px;
    border-radius: 50%;
    background: ${(p) => p.$bg};
    box-shadow: 0 1px 3px rgba(0, 0, 0, 0.25);

    &:last-child{
        margin-right: 0;
    }
`;

const Drawer = styled.button`
    position: absolute;
    right: 0;
    top: 264px;
    width: 14px;
    height: 26px;
    display: flex;
    align-items: center;
    justify-content: center;
    gap: 3px;
    border-radius: 6px 0 0 6px;
    background: #fff;

    i{
        width: 1px;
        height: 14px;
        background: #999;
    }
`;

export default App;
